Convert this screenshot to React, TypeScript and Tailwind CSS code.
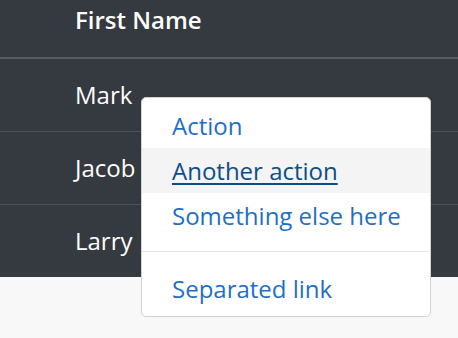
const rows = ['Mark', 'Jacob', 'Larry'];

const items = ['Action', 'Another action', 'Something else here'];

export default function App() {
  return (
    <div
      className="relative w-[458px] h-[338px] overflow-hidden bg-[#f8f8f8]"
      style={{ fontFamily: '"Open Sans", "Liberation Sans", sans-serif' }}
    >
      <div className="bg-[#343a40] text-white text-[24px]">
        <div className="flex items-center h-[59px] border-b-2 border-[#575c61] pb-[17px]">
          <div className="w-[75px]" />
          <div className="font-semibold">First Name</div>
        </div>
        {rows.map((name, i) => (
          <div
            key={name}
            className={
              i === 0
                ? 'flex items-center h-[72px]'
                : 'flex items-center h-[73px] border-t border-[#4b5157]'
            }
          >
            <div className="w-[75px]" />
            <div>{name}</div>
          </div>
        ))}
      </div>

      {/* dropdown menu */}
      <div className="absolute left-[141px] top-[97px] w-[290px] bg-white border border-[#d2d2d2] rounded-[5px] pt-[5px] pb-[5px] text-[24px] text-[#1f6fc5] whitespace-nowrap">
        {items.map((label, i) => (
          <div
            key={label}
            className={
              i === 1
                ? 'h-[45px] flex items-center pl-[30px] pr-[10px] bg-[#f4f4f4] text-[#0e4e88] underline decoration-2 underline-offset-[3px]'
                : 'h-[45px] flex items-center pl-[30px] pr-[10px]'
            }
          >
            {label}
          </div>
        ))}
        <div className="h-px bg-[#e4e4e4] mt-[13px] mb-[14px]" />
        <div className="h-[45px] flex items-center pl-[30px] pr-[10px]">Separated link</div>
      </div>
    </div>
  );
}
